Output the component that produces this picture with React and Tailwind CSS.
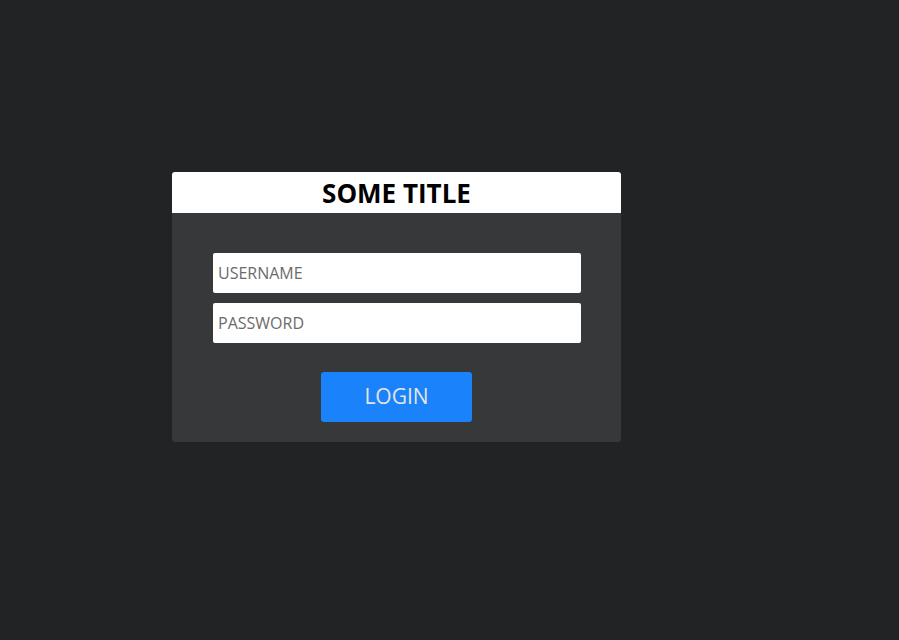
import React from 'react';

const App = () => {
  return (
    <div
      className="min-h-[640px] w-full bg-[#222325] pt-[172px] pl-[172px]"
      style={{ fontFamily: '"Open Sans", "Liberation Sans", sans-serif' }}
    >
      <div className="w-[449px] rounded-[3px] overflow-hidden bg-[#37383a]">
        <div className="h-[41px] bg-white flex items-center justify-center">
          <h1 className="text-[26px] font-bold text-black leading-none">SOME TITLE</h1>
        </div>
        <form className="flex flex-col items-center pt-[40px] pb-[20px] pl-[41px] pr-[40px]">
          <input
            type="text"
            placeholder="USERNAME"
            className="w-full h-[40px] bg-white rounded-[2px] pl-[5px] text-[16px] text-[#555] placeholder:text-[#6b6b6b] outline-none"
          />
          <input
            type="password"
            placeholder="PASSWORD"
            className="mt-[10px] w-full h-[40px] bg-white rounded-[2px] pl-[5px] text-[16px] text-[#555] placeholder:text-[#6b6b6b] outline-none"
          />
          <button
            type="button"
            className="mt-[29px] mr-[1px] w-[151px] h-[50px] rounded-[3px] bg-[#1a82fb] text-[21px] text-[#e4e4e4]"
          >
            LOGIN
          </button>
        </form>
      </div>
    </div>
  );
};

export default App;
